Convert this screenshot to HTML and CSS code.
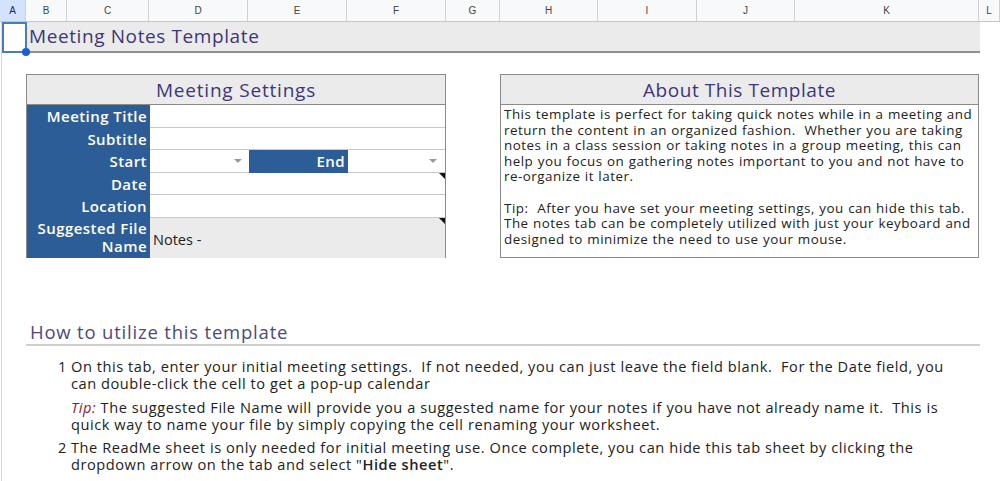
FILE: index.html
```html
<!DOCTYPE html>
<html>
<head>
<meta charset="utf-8">
<link rel="stylesheet" href="styles.css">
</head>
<body>
<div class="colhead">
  <div class="ch sel">A</div><div class="ch">B</div><div class="ch">C</div><div class="ch">D</div><div class="ch">E</div><div class="ch">F</div><div class="ch">G</div><div class="ch">H</div><div class="ch">I</div><div class="ch">J</div><div class="ch">K</div><div class="ch">L</div>
</div>
<div class="sheet">
  <div class="titlerow">
    <div class="selcell"><span class="handle"></span></div>
    <div class="title">Meeting Notes Template</div>
  </div>

  <div class="panels">
    <div class="settings">
      <div class="phead wide">Meeting Settings</div>
      <div class="sgrid">
        <div class="lab">Meeting Title</div><div class="val span3"></div>
        <div class="lab">Subtitle</div><div class="val span3"></div>
        <div class="lab">Start</div><div class="val dd"><span class="arrow"></span></div><div class="lab">End</div><div class="val dd last"><span class="arrow"></span></div>
        <div class="lab">Date</div><div class="val span3 note"></div>
        <div class="lab">Location</div><div class="val span3"></div>
        <div class="lab tall">Suggested File<br>Name</div><div class="val span3 grey note">Notes -</div>
      </div>
    </div>
    <div class="about">
      <div class="phead">About This Template</div>
      <div class="abody">
        <p>This template is perfect for taking quick notes while in a meeting and return the content in an organized fashion.&nbsp; Whether you are taking notes in a class session or taking notes in a group meeting, this can help you focus on gathering notes important to you and not have to re-organize it later.</p>
        <p>Tip:&nbsp; After you have set your meeting settings, you can hide this tab.  The notes tab can be completely utilized with just your keyboard and designed to minimize the need to use your mouse.</p>
      </div>
    </div>
  </div>

  <div class="howto">
    <h2 class="howhead">How to utilize this template</h2>
    <div class="item">
      <span class="num">1</span>
      <div class="itext">
        <p>On this tab, enter your initial meeting settings.&nbsp; If not needed, you can just leave the field blank.&nbsp; For the Date field, you can double-click the cell to get a pop-up calendar</p>
        <p class="tip"><em>Tip:</em> The suggested File Name will provide you a suggested name for your notes if you have not already name it.&nbsp; This is quick way to name your file by simply copying the cell renaming your worksheet.</p>
      </div>
    </div>
    <div class="item">
      <span class="num">2</span>
      <div class="itext">
        <p>The ReadMe sheet is only needed for initial meeting use. Once complete, you can hide this tab sheet by clicking the dropdown arrow on the tab and select "<b>Hide sheet</b>".</p>
      </div>
    </div>
  </div>
</div>
</body>
</html>
```
FILE: styles.css
```css
* { box-sizing: border-box; }
html, body { margin: 0; padding: 0; background: #fff; }
body {
  width: 1000px;
  height: 481px;
  overflow: hidden;
  font-family: "Open Sans", "Noto Sans", sans-serif;
  color: #222;
}

.colhead {
  display: grid;
  grid-template-columns: 26px 41px 82px 99px 99px 99px 54px 98px 99px 98px 184px 21px;
  height: 22px;
  background: #f8f9fa;
  border-bottom: 1px solid #c4c7c5;
}
.ch {
  font-family: "Liberation Sans", Arial, sans-serif;
  font-size: 10px;
  color: #444;
  display: flex;
  align-items: center;
  justify-content: center;
  border-right: 1px solid #d0d0d0;
}
.ch.sel { background: #d3e3fd; color: #0b2f6a; }

.sheet {
  border-left: 1px solid #dadada;
  margin-left: 1px;
  height: 459px;
}

.titlerow {
  display: flex;
  height: 31px;
  position: relative;
}
.selcell {
  width: 25px;
  border: 2px solid #4a7bc1;
  position: relative;
}
.handle {
  position: absolute;
  right: -5px;
  bottom: -5px;
  width: 8px;
  height: 8px;
  border-radius: 50%;
  background: #1a5fd0;
}
.title {
  width: 953px;
  background: #ebebeb;
  border-bottom: 2px solid #8e8e8e;
  font-size: 19px;
  letter-spacing: 0.6px;
  color: #3d3778;
  padding-left: 2px;
  line-height: 29px;
}

.panels {
  display: flex;
  gap: 54px;
  margin-top: 21px;
  margin-left: 24px;
}
.settings {
  width: 420px;
  height: 184px;
  border: 1px solid #8a8a8a;
}
.about {
  width: 479px;
  height: 184px;
  border: 1px solid #8a8a8a;
}
.phead {
  height: 30px;
  background: #ebebeb;
  border-bottom: 1px solid #8a8a8a;
  text-align: center;
  font-size: 19px;
  letter-spacing: 0.55px;
  line-height: 30px;
  color: #3d3778;
}
.phead.wide { letter-spacing: 0.8px; }

.sgrid {
  display: grid;
  grid-template-columns: 123px 99px 99px 97px;
  grid-template-rows: 23px 22px 23px 22px 23px 40px;
}
.lab {
  background: #2d5d96;
  color: #fff;
  font-weight: 600;
  font-size: 15px;
  letter-spacing: 0.45px;
  text-align: right;
  padding-right: 3px;
  line-height: 22px;
  white-space: nowrap;
}
.lab.tall { line-height: 18px; padding-top: 1px; }
.val {
  background: #fff;
  border-bottom: 1px solid #c8c8c8;
  position: relative;
  font-size: 14.5px;
}
.span3 { grid-column: span 3; }
.grey {
  background: #ebebeb;
  border-bottom: none;
  display: flex;
  align-items: center;
  padding-left: 3px;
  padding-top: 2px;
}
.arrow {
  position: absolute;
  right: 7px;
  top: 9px;
  width: 0;
  height: 0;
  border-left: 4px solid transparent;
  border-right: 4px solid transparent;
  border-top: 4px solid #9a9a9a;
}
.dd.last .arrow { right: 8px; }
.note::after {
  content: "";
  position: absolute;
  right: 0;
  top: 0;
  width: 0;
  height: 0;
  border-left: 6px solid transparent;
  border-top: 6px solid #111;
}

.abody {
  padding: 2px 3px 0 3px;
  font-size: 13.4px;
  letter-spacing: 0.5px;
  word-spacing: 0.4px;
  line-height: 15.6px;
  color: #222;
}
.abody p { margin: 0 0 15.6px; }

.howto {
  margin-left: 24px;
  width: 954px;
  margin-top: 62px;
}
.howhead {
  margin: 0;
  font-weight: 400;
  font-size: 18.5px;
  letter-spacing: 0.8px;
  color: #4c4a7c;
  padding-left: 4px;
  line-height: 24px;
  border-bottom: 2px solid #cfcfcf;
}
.item {
  display: flex;
  margin-top: 12px;
  font-size: 14.6px;
  letter-spacing: 0.55px;
  line-height: 16.6px;
}
.item + .item { margin-top: 7px; }
.num {
  width: 45px;
  text-align: right;
  padding-right: 4px;
}
.itext { width: 884px; }
.itext p { margin: 0; }
.itext .tip { margin-top: 8px; }
.tip em { color: #8a1c2a; }
.itext b { font-weight: 600; }
```
